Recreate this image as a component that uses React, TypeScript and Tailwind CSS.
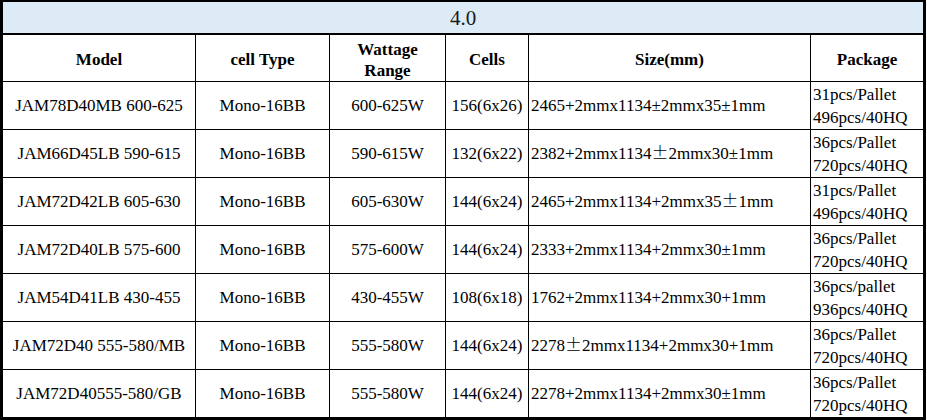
import type { ReactNode } from 'react'

type Row = {
  model: string
  cell: string
  watt: string
  cells: string
  size: ReactNode
  pack: [string, string]
}

// wide CJK-style plus/minus used in a few of the size strings
function Pm(): JSX.Element {
  return (
    <span className="inline-block w-[17px] text-center font-['Noto_Sans_CJK_SC',serif] text-[17px] font-light leading-none">
      ±
    </span>
  )
}

const rows: Row[] = [
  {
    model: 'JAM78D40MB 600-625',
    cell: 'Mono-16BB',
    watt: '600-625W',
    cells: '156(6x26)',
    size: '2465+2mmx1134±2mmx35±1mm',
    pack: ['31pcs/Pallet', '496pcs/40HQ'],
  },
  {
    model: 'JAM66D45LB 590-615',
    cell: 'Mono-16BB',
    watt: '590-615W',
    cells: '132(6x22)',
    size: (
      <>
        2382+2mmx1134<Pm />2mmx30±1mm
      </>
    ),
    pack: ['36pcs/Pallet', '720pcs/40HQ'],
  },
  {
    model: 'JAM72D42LB 605-630',
    cell: 'Mono-16BB',
    watt: '605-630W',
    cells: '144(6x24)',
    size: (
      <>
        2465+2mmx1134+2mmx35<Pm />1mm
      </>
    ),
    pack: ['31pcs/Pallet', '496pcs/40HQ'],
  },
  {
    model: 'JAM72D40LB 575-600',
    cell: 'Mono-16BB',
    watt: '575-600W',
    cells: '144(6x24)',
    size: '2333+2mmx1134+2mmx30±1mm',
    pack: ['36pcs/Pallet', '720pcs/40HQ'],
  },
  {
    model: 'JAM54D41LB 430-455',
    cell: 'Mono-16BB',
    watt: '430-455W',
    cells: '108(6x18)',
    size: '1762+2mmx1134+2mmx30+1mm',
    pack: ['36pcs/pallet', '936pcs/40HQ'],
  },
  {
    model: 'JAM72D40 555-580/MB',
    cell: 'Mono-16BB',
    watt: '555-580W',
    cells: '144(6x24)',
    size: (
      <>
        2278<Pm />2mmx1134+2mmx30+1mm
      </>
    ),
    pack: ['36pcs/Pallet', '720pcs/40HQ'],
  },
  {
    model: 'JAM72D40555-580/GB',
    cell: 'Mono-16BB',
    watt: '555-580W',
    cells: '144(6x24)',
    size: '2278+2mmx1134+2mmx30±1mm',
    pack: ['36pcs/Pallet', '720pcs/40HQ'],
  },
]

const td = 'border-r border-b border-black p-0 align-middle'
const th = 'border-r border-b border-black p-0 pt-1 align-middle'

export default function App(): JSX.Element {
  return (
    <div className="h-[420px] w-[927px] bg-white font-['Liberation_Serif','Times_New_Roman',serif] text-[17px] text-black">
      <div className="w-[926px] border-t-2 border-r-[3px] border-b-[3px] border-l-[3px] border-black">
        <table className="w-[920px] table-fixed border-separate border-spacing-0">
          <colgroup>
            <col className="w-[193px]" />
            <col className="w-[134px]" />
            <col className="w-[116px]" />
            <col className="w-[83px]" />
            <col className="w-[282px]" />
            <col className="w-[112px]" />
          </colgroup>
          <thead>
            <tr>
              <th
                colSpan={6}
                className="h-[33px] border-b-2 border-black bg-[#ddebf7] p-0 pt-px text-center font-['Liberation_Serif',serif] text-[21px] font-normal leading-none text-[#1a1a1a]"
              >
                4.0
              </th>
            </tr>
            <tr className="h-[46px] text-center font-bold">
              <th className={th}>Model</th>
              <th className={th}>cell Type</th>
              <th className={`${th} leading-[21px]`}>
                Wattage
                <br />
                Range
              </th>
              <th className={th}>Cells</th>
              <th className={th}>Size(mm)</th>
              <th className="border-b border-black p-0 pt-1 align-middle">Package</th>
            </tr>
          </thead>
          <tbody>
            {rows.map((r, i) => {
              const last = i === rows.length - 1
              const cls = last ? 'border-r border-black p-0 align-middle' : td
              return (
                <tr key={r.model} className={last ? 'h-[47px]' : 'h-[48px]'}>
                  <td className={`${cls} text-center`}>{r.model}</td>
                  <td className={`${cls} text-center`}>{r.cell}</td>
                  <td className={`${cls} text-center`}>{r.watt}</td>
                  <td className={`${cls} text-center`}>{r.cells}</td>
                  <td className={`${cls} pl-[2px] whitespace-nowrap`}>{r.size}</td>
                  <td
                    className={`${last ? '' : 'border-b border-black'} p-0 pl-[2px] align-middle leading-[23px] whitespace-nowrap`}
                  >
                    {r.pack[0]}
                    <br />
                    {r.pack[1]}
                  </td>
                </tr>
              )
            })}
          </tbody>
        </table>
      </div>
    </div>
  )
}
